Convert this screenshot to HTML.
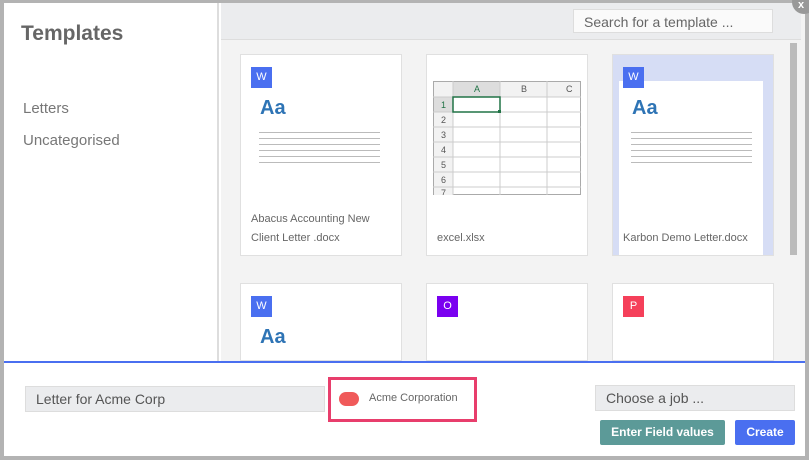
<!DOCTYPE html>
<html><head><style>
*{box-sizing:border-box;margin:0;padding:0}
html,body{width:809px;height:460px;overflow:hidden}
body{background:#b3b3b3;font-family:"Liberation Sans",sans-serif;position:relative}
.modal{position:absolute;left:4px;top:3px;width:801px;height:453px;background:#fff;overflow:hidden}
.side{position:absolute;left:0;top:0;width:215px;height:360px;background:#fff;border-right:2px solid #ddd}
.side h1{position:absolute;left:17px;top:19px;font-size:21px;font-weight:bold;color:#666}
.side a{position:absolute;left:19px;font-size:15px;color:#777}
.main{position:absolute;left:217px;top:0;width:584px;height:360px;background:#f3f3f3}
.hdr{position:absolute;left:0;top:0;width:580px;height:37px;background:#ebecee;border-bottom:1px solid #ddd}
.search{position:absolute;left:352px;top:6px;width:200px;height:24px;background:#fafafa;border:1px solid #ddd;font-size:14px;color:#666;padding:4px 10px}
.card{position:absolute;width:162px;height:202px;background:#fff;border:1px solid #e0e0e0;overflow:hidden}
.badge{position:absolute;left:10px;top:12px;width:21px;height:21px;color:#fff;font-size:11px;text-align:center;line-height:21px}
.aa{position:absolute;left:19px;top:42px;font-size:20px;font-weight:bold;color:#2e74b5}
.lines{position:absolute;left:18px;top:72px;width:121px;height:40px;background:repeating-linear-gradient(#fff 0 5px,#bbb 5px 6px)}
.cap{position:absolute;left:10px;font-size:11px;color:#666;line-height:19px}
.sb{position:absolute;left:569px;top:40px;width:7px;height:212px;background:#bbb}
.foot{position:absolute;left:0;top:358px;width:801px;height:95px;background:#fff;border-top:2px solid #4a6ff0}
.inp{position:absolute;background:#ebecee;border:1px solid #ddd;font-size:14px;color:#555;padding:4px 10px}
.btn{position:absolute;color:#fff;font-size:12px;font-weight:bold;text-align:center;line-height:25px;border-radius:2px}
</style></head><body>
<div class="modal">
<div class="side"><h1>Templates</h1><a style="top:97px">Letters</a><a style="top:129px">Uncategorised</a></div>
<div class="main">
<div class="hdr"><div class="search">Search for a template ...</div></div>
<div class="card" style="left:19px;top:51px"><div class="badge" style="background:#4a6ff0">W</div><div class="aa">Aa</div><div class="lines"></div><div class="cap" style="top:155px">Abacus Accounting New<br>Client Letter .docx</div></div>
<div class="card" style="left:205px;top:51px">
<svg style="position:absolute;left:6px;top:26px" width="148" height="114"><rect x=".5" y=".5" width="147" height="113" fill="#fff" stroke="#aaa"/><rect x="1" y="1" width="146" height="15" fill="#f2f2f2"/><rect x="1" y="1" width="19" height="113" fill="#f2f2f2"/><rect x="20" y="1" width="47" height="15" fill="#ddd"/><rect x="1" y="16" width="19" height="15" fill="#ddd"/>
<g stroke="#ccc"><line x1="20" y1="0" x2="20" y2="114"/><line x1="67" y1="0" x2="67" y2="114"/><line x1="114" y1="0" x2="114" y2="114"/><line x1="0" y1="16" x2="148" y2="16"/><line x1="0" y1="31" x2="148" y2="31"/><line x1="0" y1="46" x2="148" y2="46"/><line x1="0" y1="61" x2="148" y2="61"/><line x1="0" y1="76" x2="148" y2="76"/><line x1="0" y1="91" x2="148" y2="91"/><line x1="0" y1="106" x2="148" y2="106"/></g>
<rect x="20" y="16" width="47" height="15" fill="none" stroke="#217346" stroke-width="1.5"/><rect x="65" y="29" width="3" height="3" fill="#217346"/>
<g font-size="9" fill="#555" font-family="Liberation Sans"><text x="41" y="11" fill="#217346">A</text><text x="88" y="11">B</text><text x="133" y="11">C</text><text x="8" y="27" fill="#217346">1</text><text x="8" y="42">2</text><text x="8" y="57">3</text><text x="8" y="72">4</text><text x="8" y="87">5</text><text x="8" y="102">6</text><text x="8" y="115">7</text></g></svg>
<div class="cap" style="top:174px">excel.xlsx</div></div>
<div class="card" style="left:391px;top:51px;background:#d6ddf5"><div style="position:absolute;left:6px;top:26px;width:144px;height:176px;background:#fff"></div><div class="badge" style="background:#4a6ff0">W</div><div class="aa">Aa</div><div class="lines"></div><div class="cap" style="top:174px">Karbon Demo Letter.docx</div></div>
<div class="card" style="left:19px;top:280px;height:78px"><div class="badge" style="background:#4a6ff0">W</div><div class="aa">Aa</div><div class="lines"></div></div>
<div class="card" style="left:205px;top:280px;height:78px"><div class="badge" style="background:#7a00f0">O</div></div>
<div class="card" style="left:391px;top:280px;height:78px"><div class="badge" style="background:#f5405a">P</div><div style="position:absolute;left:22px;top:74px;font-size:13px;font-weight:bold;color:#333">Title Layout</div></div>
<div class="sb"></div>
</div>
<div class="foot">
<div class="inp" style="left:21px;top:23px;width:300px;height:26px">Letter for Acme Corp</div>
<div style="position:absolute;left:324px;top:14px;width:149px;height:45px;border:3px solid #e83e6c"><div style="position:absolute;left:8px;top:12px;width:20px;height:14px;border-radius:7px;background:#f05a5a"></div><div style="position:absolute;left:38px;top:12px;font-size:11px;color:#666">Acme Corporation</div></div>
<div class="inp" style="left:591px;top:22px;width:200px;height:26px">Choose a job ...</div>
<div class="btn" style="left:596px;top:57px;width:125px;background:#5c9a98">Enter Field values</div>
<div class="btn" style="left:731px;top:57px;width:60px;background:#4a6ff0">Create</div>
</div>
</div>
<div style="position:absolute;left:792px;top:-10px;width:24px;height:24px;border-radius:50%;background:#999;color:#fff;font-size:11px;font-weight:bold;padding:9px 0 0 6px">x</div>
</body></html>
